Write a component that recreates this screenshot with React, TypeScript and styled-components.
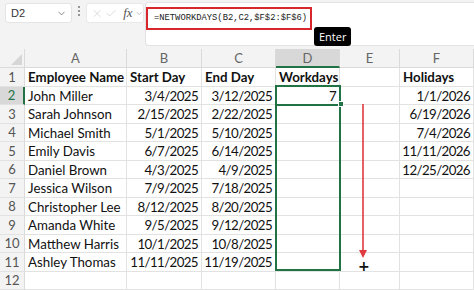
import React from 'react';
import styled, { createGlobalStyle } from 'styled-components';
import { X, Check, ChevronDown } from 'lucide-react';

const GlobalStyle = createGlobalStyle`
    html, body {
        margin: 0;
        padding: 0;
        background: #f3f3f3;
        overflow: hidden;
    }
    body {
        font-family: Lato, 'Liberation Sans', sans-serif;
    }
`;

const Page = styled.div`
    width: 474px;
    height: 290px;
    display: flex;
    flex-direction: column;
    background: #f3f3f3;
    overflow: hidden;
`;

const TopBar = styled.div`
    height: 50px;
    display: flex;
    align-items: flex-start;
    padding: 2px 0 0 5px;
    box-sizing: border-box;
`;

const NameBox = styled.div`
    margin-top: 1px;
    width: 67px;
    height: 20px;
    box-sizing: border-box;
    background: #fff;
    border: 1px solid #e4e4e4;
    border-radius: 3px;
    display: flex;
    align-items: center;
    justify-content: space-between;
    padding: 0 4px 0 5px;
    font-size: 11px;
    color: #333;
    font-family: 'Liberation Sans', sans-serif;
`;

const Dots = styled.div`
    width: 14px;
    margin-top: 4px;
    display: flex;
    flex-direction: column;
    align-items: center;
    gap: 2px;
    span {
        width: 2px;
        height: 2px;
        background: #777;
        border-radius: 1px;
    }
`;

const FxBox = styled.div`
    margin-top: 1px;
    width: 58px;
    height: 20px;
    box-sizing: border-box;
    background: #fff;
    border: 1px solid #e8e8e8;
    border-radius: 3px;
    display: flex;
    align-items: center;
    padding-left: 4px;
    gap: 2px;
    color: #c8c8c8;
`;

const Fx = styled.span`
    font-family: 'Liberation Serif', serif;
    font-style: italic;
    font-size: 13px;
    color: #555;
    margin-left: 4px;
`;

const FormulaBar = styled.div`
    position: relative;
    flex: 1;
    height: 44px;
    margin-left: 1px;
    box-sizing: border-box;
    background: #fff;
    border: 1px solid #e2e2e2;
    border-right: none;
    border-radius: 4px 0 0 4px;
    padding: 1px 0 0 0;
`;

const FormulaText = styled.div`
    display: inline-block;
    border: 2px solid #d8262d;
    padding: 3px 3px 3px 6px;
    font-family: 'Liberation Mono', monospace;
    font-size: 8.8px;
    color: #222;
    line-height: 13px;
`;

const Tooltip = styled.div`
    position: absolute;
    left: 168px;
    top: 24px;
    padding: 0 5px;
    height: 19px;
    line-height: 19px;
    background: #000;
    color: #fff;
    font-family: 'Open Sans', sans-serif;
    font-size: 11px;
    border-radius: 3px;
`;

const SheetWrap = styled.div`
    position: relative;
    flex: 1;
`;

const Grid = styled.div`
    display: grid;
    grid-template-columns: 25px 102px 75px 74px 64px 60px minmax(0, 1fr);
    grid-template-rows: 19px repeat(12, 18.5px);
    background: #fff;
`;

const Corner = styled.div`
    background: #f3f3f3;
    border-right: 1px solid #dadada;
    border-bottom: 1px solid #dadada;
    position: relative;
    &::after {
        content: '';
        position: absolute;
        right: 2px;
        bottom: 2px;
        border-left: 11px solid transparent;
        border-bottom: 11px solid #d6d6d6;
    }
`;

const ColHead = styled.div<{ $active?: boolean }>`
    background: ${p => (p.$active ? '#d8d8d8' : '#f3f3f3')};
    border-right: 1px solid #dadada;
    border-bottom: ${p => (p.$active ? '2px solid #217346' : '1px solid #dadada')};
    display: flex;
    align-items: center;
    justify-content: center;
    font-size: 13px;
    color: #666;
    box-sizing: border-box;
`;

const RowHead = styled.div<{ $active?: boolean }>`
    background: ${p => (p.$active ? '#d8d8d8' : '#f3f3f3')};
    border-right: ${p => (p.$active ? '2px solid #217346' : '1px solid #dadada')};
    border-bottom: 1px solid #e2e2e2;
    display: flex;
    align-items: center;
    justify-content: center;
    font-size: 13px;
    color: ${p => (p.$active ? '#217346' : '#555')};
    box-sizing: border-box;
`;

const Cell = styled.div<{ $right?: boolean; $bold?: boolean }>`
    min-width: 0;
    border-right: 1px solid #e2e2e2;
    border-bottom: 1px solid #e2e2e2;
    display: flex;
    align-items: center;
    justify-content: ${p => (p.$right ? 'flex-end' : 'flex-start')};
    padding: 1px 3px 0 3px;
    font-size: 13.3px;
    font-weight: ${p => (p.$bold ? 700 : 400)};
    letter-spacing: ${p => (p.$right ? '-0.6px' : '0')};
    color: #111;
    white-space: nowrap;
    overflow: visible;
    box-sizing: border-box;
`;

const Selection = styled.div`
    position: absolute;
    left: 275px;
    top: 36px;
    width: 66px;
    height: 186px;
    box-sizing: border-box;
    border: 2px solid #217346;
    pointer-events: none;
`;

const ActiveCell = styled.div`
    position: absolute;
    left: 275px;
    top: 36px;
    width: 66px;
    height: 21px;
    box-sizing: border-box;
    border-bottom: 2px solid #217346;
    &::after {
        content: '';
        position: absolute;
        right: -3px;
        bottom: -3px;
        width: 4px;
        height: 4px;
        background: #217346;
        border: 1px solid #fff;
    }
`;

const Arrow = styled.svg`
    position: absolute;
    left: 356px;
    top: 55px;
`;

const Cross = styled.div`
    position: absolute;
    left: 358px;
    top: 211px;
    font-family: 'DejaVu Sans', sans-serif;
    font-size: 14px;
    font-weight: 700;
    color: #111;
    line-height: 12px;
`;

const rows: [string, string, string, string, string][] = [
    ['Employee Name', 'Start Day', 'End Day', 'Workdays', 'Holidays'],
    ['John Miller', '3/4/2025', '3/12/2025', '7', '1/1/2026'],
    ['Sarah Johnson', '2/15/2025', '2/22/2025', '', '6/19/2026'],
    ['Michael Smith', '5/1/2025', '5/10/2025', '', '7/4/2026'],
    ['Emily Davis', '6/7/2025', '6/14/2025', '', '11/11/2026'],
    ['Daniel Brown', '4/3/2025', '4/9/2025', '', '12/25/2026'],
    ['Jessica Wilson', '7/9/2025', '7/18/2025', '', ''],
    ['Christopher Lee', '8/12/2025', '8/20/2025', '', ''],
    ['Amanda White', '9/5/2025', '9/12/2025', '', ''],
    ['Matthew Harris', '10/1/2025', '10/8/2025', '', ''],
    ['Ashley Thomas', '11/11/2025', '11/19/2025', '', ''],
    ['', '', '', '', ''],
];

const App: React.FC = () => {
    return (
        <Page>
            <GlobalStyle />
            <TopBar>
                <NameBox>
                    D2
                    <ChevronDown size={11} color='#555' strokeWidth={1.5} />
                </NameBox>
                <Dots><span /><span /><span /></Dots>
                <FxBox>
                    <X size={13} strokeWidth={1.3} />
                    <Check size={13} strokeWidth={1.3} />
                    <Fx>fx</Fx>
                    <ChevronDown size={9} color='#888' strokeWidth={1.5} />
                </FxBox>
                <FormulaBar>
                    <FormulaText>=NETWORKDAYS(B2,C2,$F$2:$F$6)</FormulaText>
                    <Tooltip>Enter</Tooltip>
                </FormulaBar>
            </TopBar>
            <SheetWrap>
                <Grid>
                    <Corner />
                    {['A', 'B', 'C', 'D', 'E', 'F'].map(c => (
                        <ColHead key={c} $active={c === 'D'}>{c}</ColHead>
                    ))}
                    {rows.map((r, i) => {
                        const header = i === 0;
                        return (
                            <React.Fragment key={i}>
                                <RowHead $active={i === 1}>{i + 1}</RowHead>
                                <Cell $bold={header}>{r[0]}</Cell>
                                <Cell $bold={header} $right={!header}>{r[1]}</Cell>
                                <Cell $bold={header} $right={!header}>{r[2]}</Cell>
                                <Cell $bold={header} $right={!header}>{r[3]}</Cell>
                                <Cell />
                                <Cell $bold={header} $right={!header}>{r[4]}</Cell>
                            </React.Fragment>
                        );
                    })}
                </Grid>
                <Selection />
                <ActiveCell />
                <Arrow width='14' height='156' viewBox='0 0 14 156'>
                    <line x1='7' y1='0' x2='7' y2='150' stroke='#e0393e' strokeWidth='1.6' />
                    <path d='M3 146 L7 154 L11 146 Z' fill='#e0393e' />
                </Arrow>
                <Cross>+</Cross>
            </SheetWrap>
        </Page>
    );
};

export default App;
